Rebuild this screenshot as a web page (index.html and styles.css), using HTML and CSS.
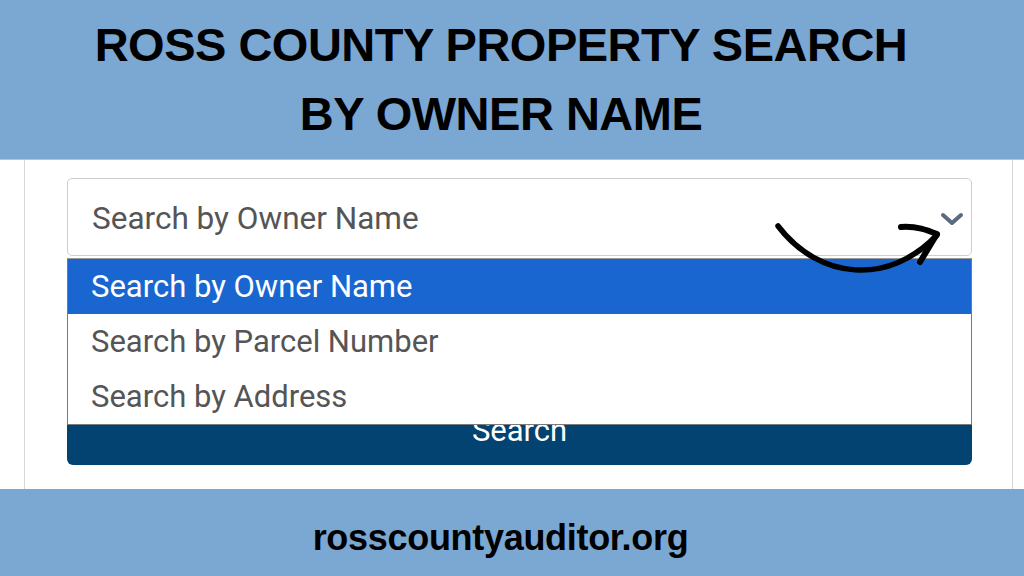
FILE: index.html
```html
<!DOCTYPE html>
<html>
  <head>
    <title>Ross County Property Search</title>
    <link rel="stylesheet" href="styles.css">
  </head>
  <body>
    <header class="banner">
      <h1>ROSS COUNTY PROPERTY SEARCH<br>BY OWNER NAME</h1>
    </header>

    <main class="page">
      <div class="search-panel">
        <div class="select-box">
          <span>Search by Owner Name</span>
          <svg class="chevron" width="26" height="16" viewBox="0 0 26 16">
            <polyline points="4,4 13,12 22,4" fill="none" stroke="#5b6a7e" stroke-width="4" stroke-linecap="round" stroke-linejoin="round"/>
          </svg>
        </div>

        <button class="search-btn" type="button">Search</button>

        <!-- open dropdown list, sits on top of the form -->
        <ul class="options">
          <li class="selected">Search by Owner Name</li>
          <li>Search by Parcel Number</li>
          <li>Search by Address</li>
        </ul>

        <!-- hand drawn arrow pointing at the chevron -->
        <svg class="pointer" width="905" height="120" viewBox="0 0 905 120">
          <path d="M711 48 C 752 102, 822 108, 870 57" fill="none" stroke="#000" stroke-width="5.5" stroke-linecap="round"/>
          <path d="M834 49 C 850 48, 860 52, 870 56 L 853 84" fill="none" stroke="#000" stroke-width="6" stroke-linecap="round" stroke-linejoin="round"/>
        </svg>
      </div>
    </main>

    <footer class="site-footer">rosscountyauditor.org</footer>
  </body>
</html>
```

FILE: styles.css
```css
* {
  box-sizing: border-box;
}

body {
  margin: 0;
  padding: 0;
  font-family: Roboto, "Liberation Sans", Arial, sans-serif;
  background-color: #7ba7d3;
}

.banner {
  height: 160px;
  padding: 10px 22px 0 0;
  background-color: #7ba7d3;
  border-bottom: 1px solid #a9c4e4;
}

.banner h1 {
  margin: 0;
  text-align: center;
  font-family: "Liberation Sans", Arial, sans-serif;
  font-weight: bold;
  font-size: 47px;
  line-height: 69px;
  letter-spacing: -0.5px;
  color: #000;
}

.page {
  height: 329px;
  margin: 0 11px 0 24px;
  padding: 18px 40px 0 42px;
  background-color: #fff;
  border-left: 1px solid #d6d6d6;
  border-right: 1px solid #d6d6d6;
  box-shadow: -24px 0 0 #fff, 12px 0 0 #fff;
}

.search-panel {
  position: relative;
}

.select-box {
  display: flex;
  align-items: center;
  justify-content: space-between;
  height: 78px;
  padding: 2px 6px 0 24px;
  border: 1px solid #cfcfcf;
  border-radius: 5px;
  font-size: 31.5px;
  color: #555;
}

.chevron {
  margin-top: 2px;
}

.search-btn {
  display: block;
  width: 100%;
  height: 60px;
  margin-top: 149px;
  padding: 0 0 9px 0;
  background-color: #024372;
  color: #fff;
  border: none;
  border-radius: 0 0 6px 6px;
  font-family: Roboto, "Liberation Sans", Arial, sans-serif;
  font-size: 31px;
}

.options {
  position: absolute;
  top: 80px;
  left: 0;
  right: 0;
  margin: 0;
  padding: 0;
  list-style: none;
  background-color: #fff;
  border: 1px solid #7a7a7a;
  border-top-color: #999;
  font-size: 31px;
  color: #555;
}

.options li {
  height: 55px;
  line-height: 55px;
  padding-left: 23px;
}

.options li.selected {
  background-color: #1a66d1;
  color: #fff;
}

.pointer {
  position: absolute;
  top: 0;
  left: 0;
  pointer-events: none;
}

.site-footer {
  height: 87px;
  padding: 28px 23px 0 0;
  text-align: center;
  font-family: "Liberation Sans", Arial, sans-serif;
  font-weight: bold;
  font-size: 36px;
  letter-spacing: -0.3px;
  color: #000;
  background-color: #7ba7d3;
}
```
